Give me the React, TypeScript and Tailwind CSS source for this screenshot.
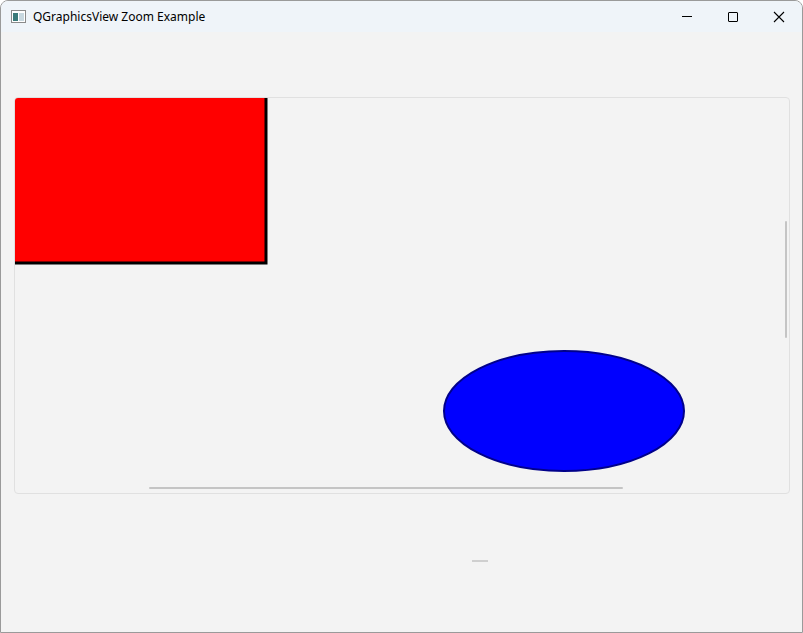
export default function App() {
  return (
    <div className="w-[803px] h-[633px] bg-[#f3f3f3] flex flex-col border border-[#9a9a9a] rounded-t-[8px] overflow-hidden" style={{ fontFamily: '"Segoe UI","Noto Sans","Liberation Sans",sans-serif' }}>
      <div className="h-[31px] bg-[#eff4f9] flex items-center shrink-0">
        <svg width="16" height="16" viewBox="0 0 16 16" className="ml-[10px]">
          <rect x="0.5" y="1.5" width="14" height="12" fill="#fff" stroke="#8a8a8a" />
          <rect x="2" y="4" width="5" height="8" fill="#3a7a7a" />
          <rect x="8" y="4" width="5" height="8" fill="#c8d8e0" />
        </svg>
        <span className="ml-[6px] text-[12px] text-black">QGraphicsView Zoom Example</span>
        <div className="ml-auto flex h-full">
          <div className="w-[46px] flex items-center justify-center"><div className="w-[10px] h-px bg-black" /></div>
          <div className="w-[46px] flex items-center justify-center"><div className="w-[10px] h-[10px] border border-black rounded-[1px]" /></div>
          <div className="w-[46px] flex items-center justify-center">
            <svg width="12" height="12" viewBox="0 0 12 12"><path d="M1 1L11 11M11 1L1 11" stroke="#000" strokeWidth="1.1" /></svg>
          </div>
        </div>
      </div>
      <div className="h-[65px] shrink-0" />
      <div className="ml-[13px] mr-[12px] h-[397px] border border-[#e0e0e0] rounded-[4px] relative overflow-hidden">
        <svg width="776" height="397" className="block">
          <rect x="0" y="-2" width="251" height="166" fill="#ff0000" />
          <path d="M251 -2V165H0" stroke="#000" strokeWidth="3" fill="none" />
          <ellipse cx="549" cy="313" rx="120" ry="60" fill="#0000ff" stroke="#00008b" strokeWidth="2" />
        </svg>
        <div className="absolute left-[770px] top-[123px] w-[2px] h-[117px] bg-[#c4c4c4] rounded" />
        <div className="absolute left-[134px] top-[389px] w-[474px] h-[2px] bg-[#c4c4c4] rounded" />
      </div>
      <div className="flex justify-center mt-[66px]">
        <div className="w-[16px] h-[2px] bg-[#cfcfcf] ml-[157px]" />
      </div>
    </div>
  );
}
